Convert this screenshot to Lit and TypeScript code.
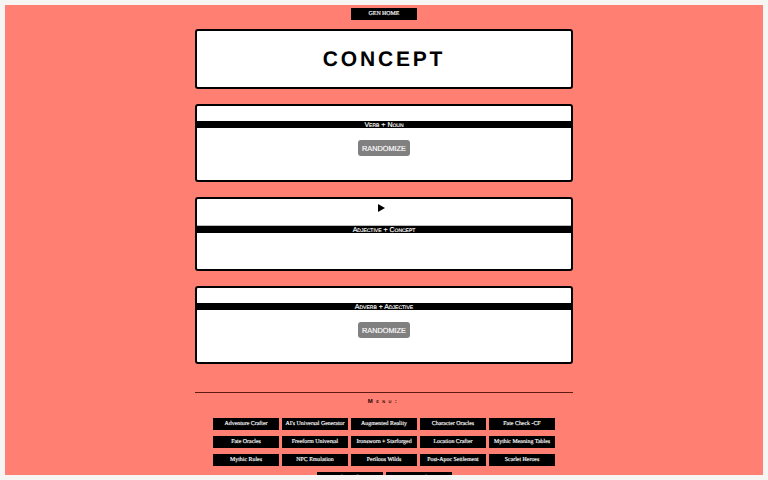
import { LitElement, html, css } from "lit";
import { customElement } from "lit/decorators.js";

const MENU = [
  "Adventure Crafter", "AI's Universal Generator", "Augmented Reality", "Character Oracles", "Fate Check -CF",
  "Fate Oracles", "Freeform Universal", "Ironsworn + Starforged", "Location Crafter", "Mythic Meaning Tables",
  "Mythic Rules", "NPC Emulation", "Perilous Wilds", "Post-Apoc Settlement", "Scarlet Heroes",
  "Solo Toolkit", "Tiny Solo",
];

@customElement("app-root")
export class AppRoot extends LitElement {
  static styles = css`
    :host { display: block; height: 480px; box-sizing: border-box; padding: 5px; background: #f6f5f4; overflow: hidden; text-rendering: geometricPrecision; }
    .page { height: 470px; background: #ff8072; overflow: hidden; display: flex; flex-direction: column; align-items: center; padding-top: 3px; box-sizing: border-box; }
    .link { width: 66px; height: 12px; background: #000; color: #fff; display: flex; align-items: center; justify-content: center; font: 5.9px/12px "Liberation Serif", serif; -webkit-text-stroke: 0.15px #fff; white-space: nowrap; flex: none; }
    .home { margin-bottom: 9px; }
    .card { width: 378px; box-sizing: border-box; background: #fff; border: 2px solid #000; border-radius: 3px; margin-bottom: 15px; flex: none; }
    .title { height: 60px; display: flex; align-items: center; justify-content: center; font: 700 21px "Liberation Sans", sans-serif; letter-spacing: 2.8px; color: #000; padding-top: 1px; }
    .top { height: 15px; display: flex; align-items: center; justify-content: center; }
    .top.tall { height: 26px; border-bottom: 1px solid #bbb; box-sizing: content-box; padding-right: 6px; align-items: flex-start; }
    .bar { height: 7px; background: #000; color: #fff; text-align: center; font: 7px/9px "Liberation Sans", sans-serif; font-variant: small-caps; -webkit-text-stroke: 0.15px #fff; white-space: nowrap; }
    .body { display: flex; justify-content: center; padding-top: 12px; box-sizing: border-box; }
    .n { height: 52px; }
    .e { height: 36px; }
    .btn { width: 52px; height: 16px; background: #808080; color: #fff; border-radius: 3px; display: flex; align-items: center; justify-content: center; font: 7.3px "Liberation Sans", sans-serif; -webkit-text-stroke: 0.15px #fff; }
    .play { width: 7px; height: 8px; display: block; margin-top: 5px; }
    .rule { width: 378px; height: 1px; background: #5c1a12; margin-top: 13px; flex: none; }
    .menu-label { margin-top: 5px; font: 700 6px/8px "Liberation Sans", sans-serif; font-variant: small-caps; letter-spacing: 3.4px; color: #200; flex: none; }
    .menu { margin-top: 12px; display: flex; flex-wrap: wrap; justify-content: center; gap: 6px 3px; width: 345px; flex: none; }
  `;

  render() {
    return html`<div class="page">
      <div class="link home">GEN HOME</div>
      <div class="card title">CONCEPT</div>
      <div class="card">
        <div class="top"></div>
        <div class="bar">Verb + Noun</div>
        <div class="body n"><div class="btn">RANDOMIZE</div></div>
      </div>
      <div class="card">
        <div class="top tall">
          <svg class="play" viewBox="0 0 7 8"><path d="M0 0L7 4L0 8Z" fill="#000"></path></svg>
        </div>
        <div class="bar">Adjective + Concept</div>
        <div class="e"></div>
      </div>
      <div class="card">
        <div class="top"></div>
        <div class="bar">Adverb + Adjective</div>
        <div class="body n"><div class="btn">RANDOMIZE</div></div>
      </div>
      <div class="rule"></div>
      <div class="menu-label">Menu:</div>
      <div class="menu">${MENU.map((m) => html`<div class="link">${m}</div>`)}</div>
    </div>`;
  }
}
